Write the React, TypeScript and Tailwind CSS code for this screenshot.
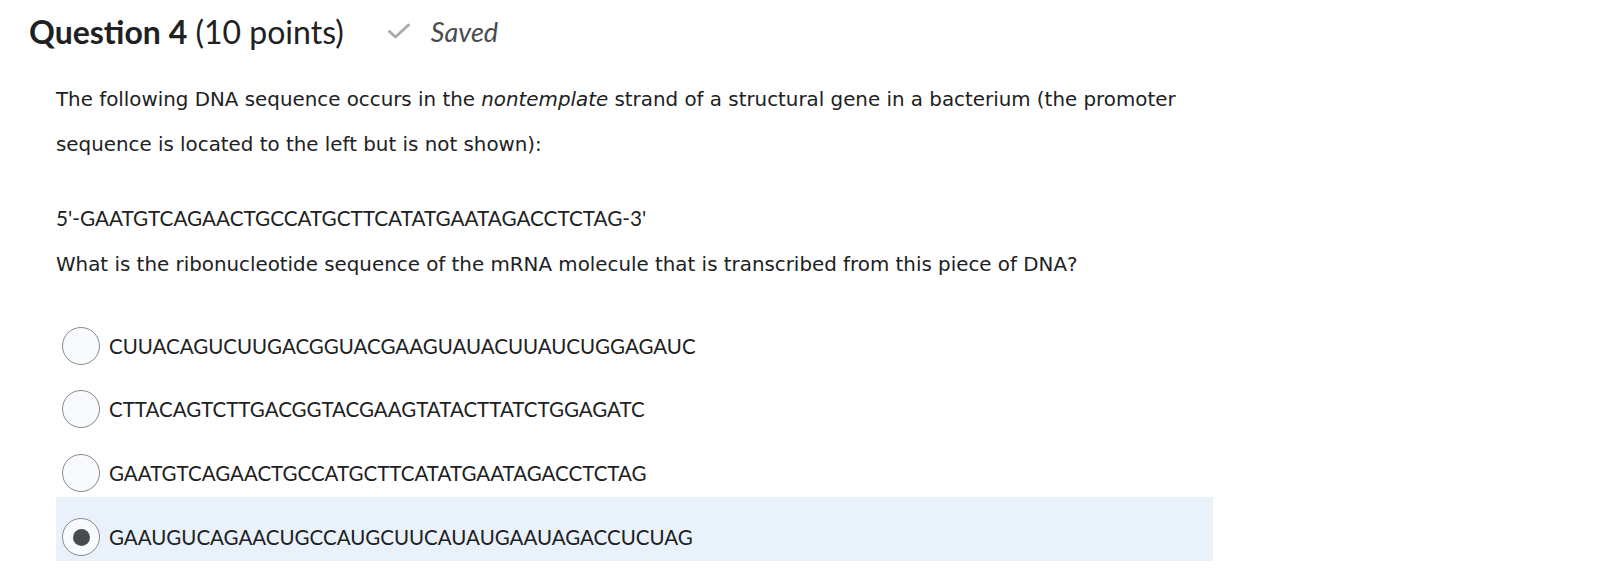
import React from 'react';

const options = [
  { id: 'a', text: 'CUUACAGUCUUGACGGUACGAAGUAUACUUAUCUGGAGAUC' },
  { id: 'b', text: 'CTTACAGTCTTGACGGTACGAAGTATACTTATCTGGAGATC' },
  { id: 'c', text: 'GAATGTCAGAACTGCCATGCTTCATATGAATAGACCTCTAG' },
  { id: 'd', text: 'GAAUGUCAGAACUGCCAUGCUUCAUAUGAAUAGACCUCUAG' },
];

const Radio = ({ checked }: { checked: boolean }) => (
  <span className="flex h-[38px] w-[38px] shrink-0 items-center justify-center rounded-full border border-[#868b8f] bg-[#f9fafe]">
    {checked && <span className="h-[17px] w-[17px] rounded-full bg-[#494c4e]" />}
  </span>
);

export default function App() {
  const selected = 'd';

  return (
    <div className="h-[572px] w-[1598px] overflow-hidden bg-white text-[#202122]">
      <div className="flex h-[64px] items-center pl-[29px] font-['Lato',sans-serif]">
        <h2 className="text-[32px] leading-none">
          <span className="font-bold">Question 4</span> <span>(10 points)</span>
        </h2>
        <svg className="ml-[43px] mt-[-2px] h-[16px] w-[24px]" viewBox="0 0 24 16" fill="none">
          <path d="M2.5 8.5l6 5.5L21.5 2" stroke="#a7acb0" strokeWidth="3" strokeLinecap="round" strokeLinejoin="round" />
        </svg>
        <span className="ml-[20px] text-[27px] italic text-[#494c4e]">Saved</span>
      </div>

      <div className="pl-[56px]">
        <p className="mt-[13px] w-[1160px] font-['DejaVu_Sans',Verdana,sans-serif] text-[19.85px] leading-[45px]">
          The following DNA sequence occurs in the <em>nontemplate</em> strand of a structural gene in a bacterium (the promoter sequence is located to the left but is not shown):
        </p>
        <p className="mt-[28px] font-['Lato',sans-serif] text-[20.7px] leading-[47px]">
          5'-GAATGTCAGAACTGCCATGCTTCATATGAATAGACCTCTAG-3'
        </p>
        <p className="font-['DejaVu_Sans',Verdana,sans-serif] text-[19.85px] leading-[45px]">
          What is the ribonucleotide sequence of the mRNA molecule that is transcribed from this piece of DNA?
        </p>

        <div className="mt-[40px] w-[1157px] font-['Lato',sans-serif] text-[20.5px]">
          {options.map((o, i) => {
            const isSel = o.id === selected;
            let cls = 'flex items-center gap-[9px] pl-[6px]';
            if (isSel) cls += ' mt-[5px] bg-[#e9f1fa] pb-[5px] pt-[21px]';
            else if (i === 1) cls += ' mt-[25px]';
            else if (i === 2) cls += ' mt-[26px]';
            return (
              <label key={o.id} className={cls}>
                <Radio checked={isSel} />
                <span>{o.text}</span>
              </label>
            );
          })}
        </div>
      </div>
    </div>
  );
}
